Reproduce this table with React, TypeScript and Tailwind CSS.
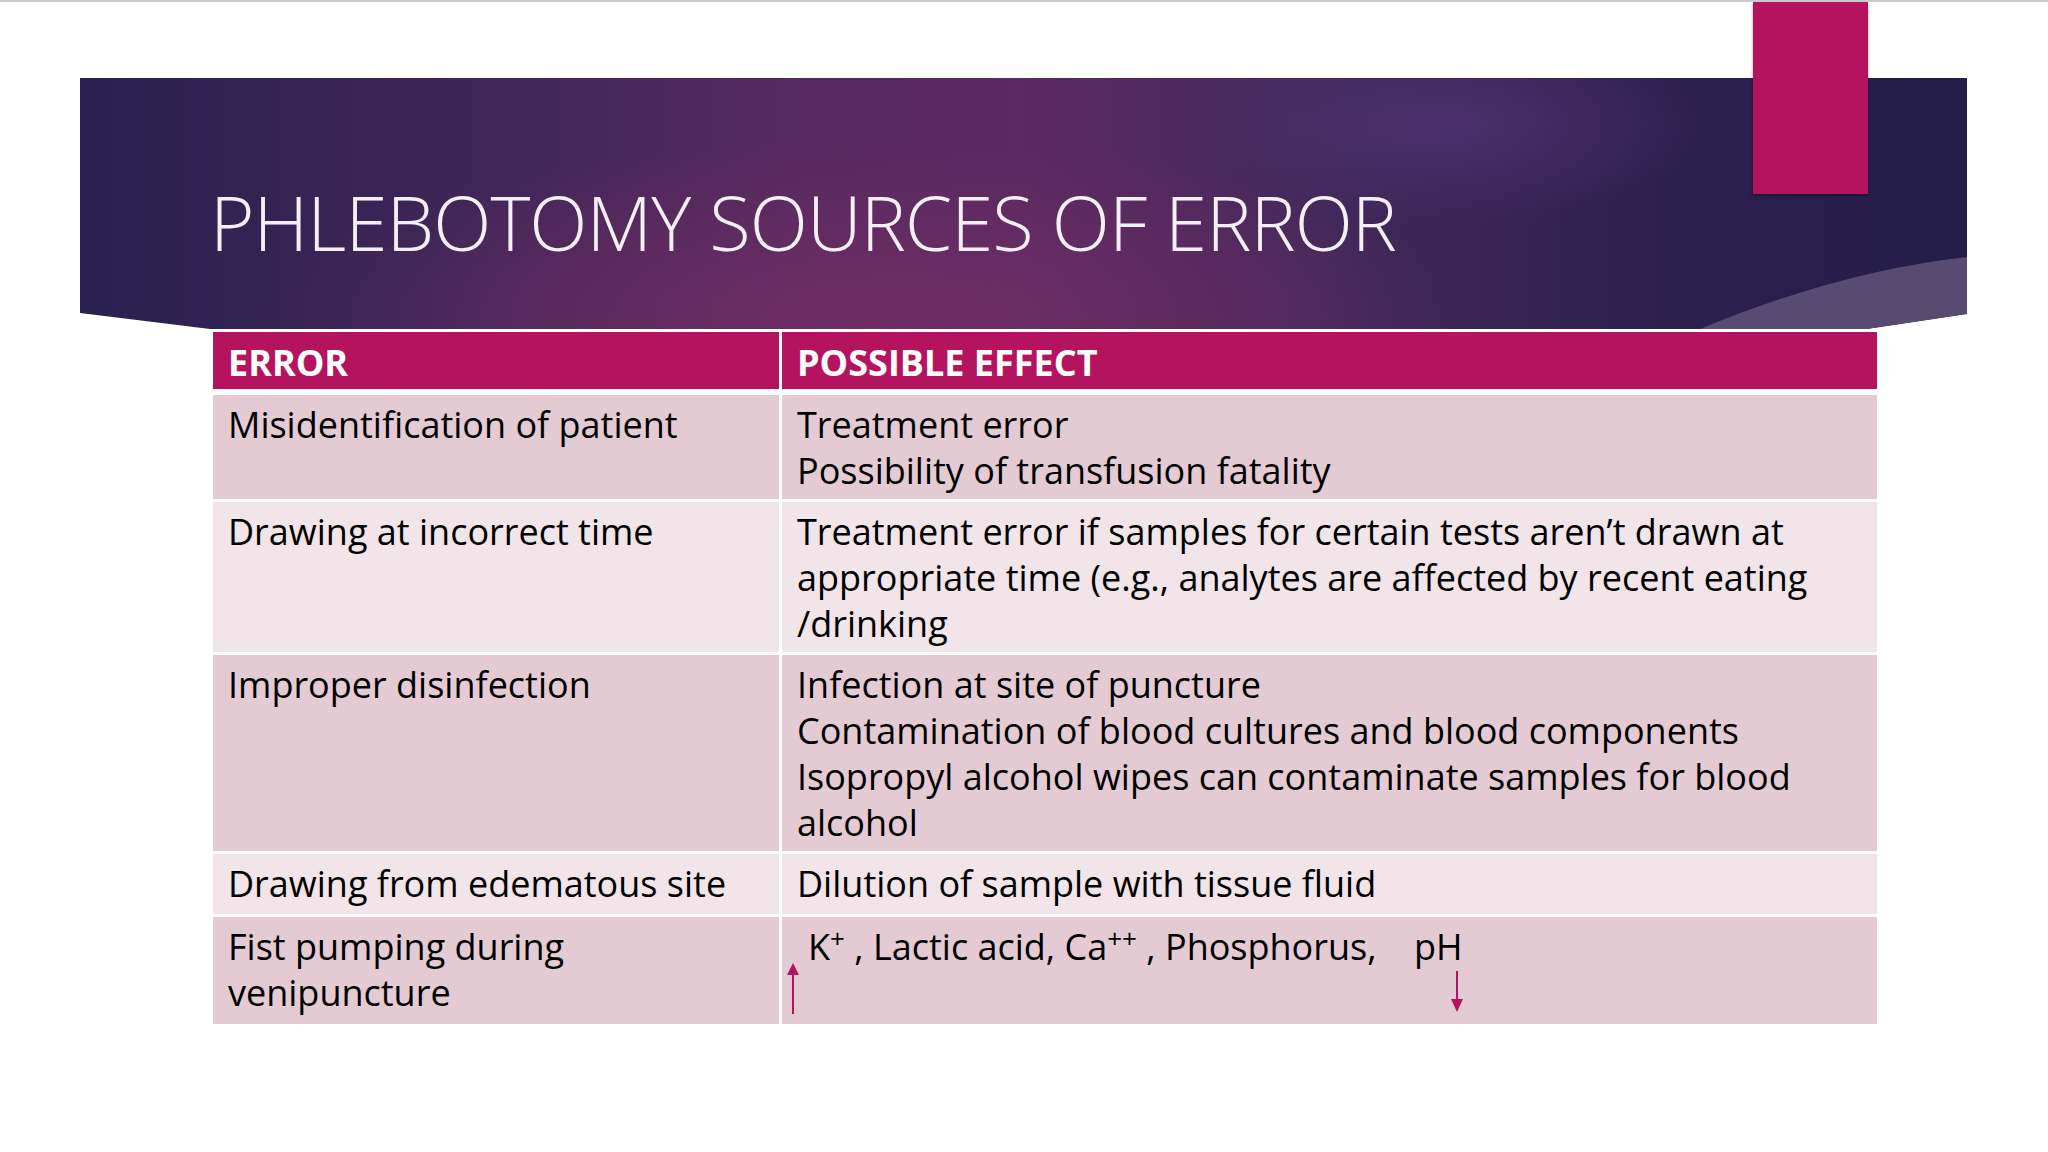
import React from "react";

const rowDark = "bg-[#e4cbd3]";
const rowLight = "bg-[#f1e5ea]";

function Cell({ children, className = "" }: { children: React.ReactNode; className?: string }) {
  return (
    <div className={`relative pl-[15px] pt-[7px] pb-[5px] text-[36px] leading-[46px] text-black ${className}`}>
      {children}
    </div>
  );
}

function Lines({ lines }: { lines: string[] }) {
  return (
    <>
      {lines.map((l, i) => (
        <div key={i} className="whitespace-nowrap">
          {l}
        </div>
      ))}
    </>
  );
}

export default function App() {
  return (
    <div className="relative w-[2048px] h-[1152px] overflow-hidden bg-white border-t-2 border-[#cbcbcb] pt-[76px] font-['Open_Sans','Noto_Sans',sans-serif]">
      {/* Title banner */}
      <div className="relative ml-[80px] w-[1887px] h-[252px] [clip-path:polygon(0_0,100%_0,100%_236px,1787px_251px,130px_251px,0_235px)] bg-[radial-gradient(ellipse_32%_70%_at_42%_95%,#6f2d64_0%,rgba(111,45,100,0)_100%),radial-gradient(ellipse_14%_40%_at_72%_18%,#4b2f6d_0%,rgba(75,47,109,0)_100%),linear-gradient(90deg,#2a2150_0%,#3b2556_18%,#552a5e_38%,#5a2a60_50%,#42285a_66%,#2e2150_82%,#241d48_100%)] pl-[130px] pt-[106px]">
        <h1 className="text-[76px] leading-[76px] font-light text-[#f3eff5] whitespace-nowrap tracking-[-0.9px]">
          PHLEBOTOMY SOURCES OF ERROR
        </h1>
        <svg className="absolute left-0 top-0" width="1887" height="252" viewBox="0 0 1887 252">
          <path d="M1620 251 Q1760 193 1887 179 L1887 236 L1787 251 Z" fill="#574b72" />
        </svg>
      </div>

      {/* Magenta tab */}
      <div className="absolute left-[1753px] top-0 w-[115px] h-[192px] bg-[#b4145f] shadow-[0_2px_3px_rgba(0,0,0,0.35)]" />

      {/* Table */}
      <div className="ml-[213px] mt-[2px] w-[1664px] flex flex-col gap-[3px]">
        <div className="grid grid-cols-[566px_1095px] gap-x-[3px] mb-[3px]">
          <div className="bg-[#b4145f] pl-[15px] pt-[8px] pb-[3px] text-[36px] leading-[46px] font-bold text-white">ERROR</div>
          <div className="bg-[#b4145f] pl-[15px] pt-[8px] pb-[3px] text-[36px] leading-[46px] font-bold text-white">POSSIBLE EFFECT</div>
        </div>

        <div className="grid grid-cols-[566px_1095px] gap-x-[3px]">
          <Cell className={rowDark}>
            <Lines lines={["Misidentification of patient"]} />
          </Cell>
          <Cell className={rowDark}>
            <Lines lines={["Treatment error", "Possibility of transfusion fatality"]} />
          </Cell>
        </div>

        <div className="grid grid-cols-[566px_1095px] gap-x-[3px]">
          <Cell className={rowLight}>
            <Lines lines={["Drawing at incorrect time"]} />
          </Cell>
          <Cell className={rowLight}>
            <Lines
              lines={[
                "Treatment error if samples for certain tests aren\u2019t drawn at",
                "appropriate time (e.g., analytes are affected by recent eating",
                "/drinking",
              ]}
            />
          </Cell>
        </div>

        <div className="grid grid-cols-[566px_1095px] gap-x-[3px]">
          <Cell className={rowDark}>
            <Lines lines={["Improper disinfection"]} />
          </Cell>
          <Cell className={rowDark}>
            <Lines
              lines={[
                "Infection at site of puncture",
                "Contamination of blood cultures and blood components",
                "Isopropyl alcohol wipes can contaminate samples for blood",
                "alcohol",
              ]}
            />
          </Cell>
        </div>

        <div className="grid grid-cols-[566px_1095px] gap-x-[3px]">
          <Cell className={`${rowLight} pb-[7px]`}>
            <Lines lines={["Drawing from edematous site"]} />
          </Cell>
          <Cell className={`${rowLight} pb-[7px]`}>
            <Lines lines={["Dilution of sample with tissue fluid"]} />
          </Cell>
        </div>

        <div className="grid grid-cols-[566px_1095px] gap-x-[3px]">
          <Cell className={rowDark}>
            <Lines lines={["Fist pumping during", "venipuncture"]} />
          </Cell>
          <Cell className={rowDark}>
            <div className="whitespace-pre pl-[11px]">
              K<span className="relative top-[-12px] text-[26px]">+</span> , Lactic acid, Ca
              <span className="relative top-[-12px] text-[26px]">++</span> , Phosphorus,{"    "}pH
            </div>
            <div className="h-[46px]" />
            <svg className="absolute left-[4px] top-[44px]" width="14" height="54" viewBox="0 0 14 54">
              <path d="M7 2 L13 14 L1 14 Z" fill="#b4145f" />
              <line x1="7" y1="12" x2="7" y2="53" stroke="#b4145f" strokeWidth="2" />
            </svg>
            <svg className="absolute left-[668px] top-[54px]" width="14" height="42" viewBox="0 0 14 42">
              <line x1="7" y1="0" x2="7" y2="30" stroke="#b4145f" strokeWidth="2" />
              <path d="M1 28 L13 28 L7 41 Z" fill="#b4145f" />
            </svg>
          </Cell>
        </div>
      </div>
    </div>
  );
}
